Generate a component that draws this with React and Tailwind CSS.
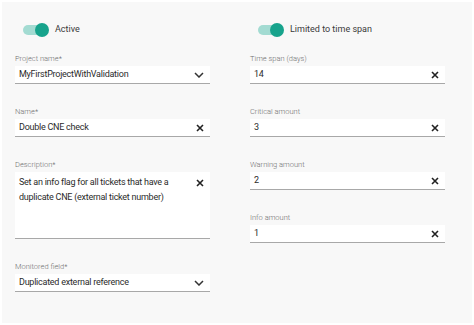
import React from "react";

function Toggle({ label }) {
    return (
        <div className="flex items-center h-[18px]">
            <div className="relative w-[24px] h-[10px] ml-[8px] rounded-full bg-[#a3dbd2]">
                <div className="absolute right-[-2px] top-[-2px] w-[14px] h-[14px] rounded-full bg-[#17a38c]" />
            </div>
            <span className="ml-[8px] text-[9px] text-[#3a3a3a]">{label}</span>
        </div>
    );
}

function Chevron() {
    return (
        <svg width="10" height="6" viewBox="0 0 10 6" className="shrink-0">
            <path d="M1 1 L5 5 L9 1" fill="none" stroke="#333" strokeWidth="1.5" />
        </svg>
    );
}

function Close() {
    return (
        <svg width="8" height="8" viewBox="0 0 8 8" className="shrink-0">
            <path d="M1 1 L7 7 M7 1 L1 7" fill="none" stroke="#222" strokeWidth="1.6" />
        </svg>
    );
}

function Field({ label, value, icon, className = "" }) {
    return (
        <div className={`flex flex-col ${className}`}>
            <div className="h-[10px] text-[7.5px] leading-[10px] font-light text-[#6f6f6f]">{label}</div>
            <div className="mt-[2px] h-[18px] flex items-center justify-between pl-[4px] pr-[6px] bg-white border-b border-[#a8a8a8] text-[9px] tracking-[-0.25px] text-[#2b2b2b]">
                <span>{value}</span>
                {icon === "chevron" ? <Chevron /> : <Close />}
            </div>
        </div>
    );
}

export default function App() {
    return (
        <div className="w-[474px] h-[325px] bg-white p-[2px]" style={{ fontFamily: "Roboto, 'Open Sans', sans-serif" }}>
            <div className="h-full bg-[#f8f8f8] pl-[13px] pt-[19px] grid grid-cols-[195px_195px] gap-x-[40px]">
                {/* Left column */}
                <div className="flex flex-col">
                    <Toggle label="Active" />
                    <Field className="mt-[15px]" label="Project name*" value="MyFirstProjectWithValidation" icon="chevron" />
                    <Field className="mt-[23px]" label="Name*" value="Double CNE check" />
                    <div className="flex flex-col mt-[23px]">
                        <div className="h-[10px] text-[7.5px] leading-[10px] font-light text-[#6f6f6f]">Description*</div>
                        <div className="mt-[2px] h-[67px] flex justify-between pl-[4px] pr-[6px] pt-[3px] bg-white border-b border-[#a8a8a8] text-[9px] tracking-[-0.25px] leading-[15px] text-[#2b2b2b]">
                            <span>
                                Set an info flag for all tickets that have a
                                <br />
                                duplicate CNE (external ticket number)
                            </span>
                            <div className="pt-[4px]">
                                <Close />
                            </div>
                        </div>
                    </div>
                    <Field className="mt-[23px]" label="Monitored field*" value="Duplicated external reference" icon="chevron" />
                </div>

                {/* Right column */}
                <div className="flex flex-col">
                    <Toggle label="Limited to time span" />
                    <Field className="mt-[15px]" label="Time span (days)" value="14" />
                    <Field className="mt-[23px]" label="Critical amount" value="3" />
                    <Field className="mt-[23px]" label="Warning amount" value="2" />
                    <Field className="mt-[23px]" label="Info amount" value="1" />
                </div>
            </div>
        </div>
    );
}
